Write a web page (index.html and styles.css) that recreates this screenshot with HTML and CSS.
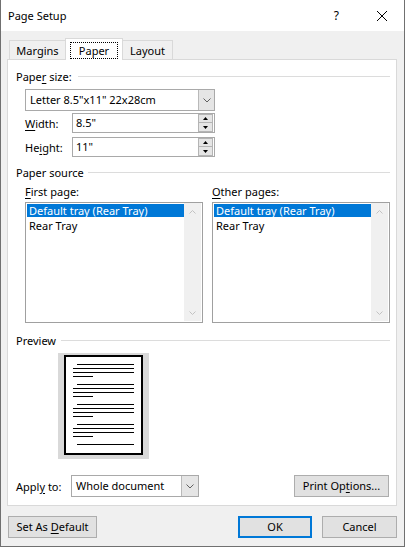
FILE: index.html
```
<!DOCTYPE html>
<html>
<head>
<meta charset="utf-8">
<title>Page Setup</title>
<link rel="stylesheet" href="styles.css">
</head>
<body>
<div class="dialog">
  <div class="titlebar">
    <span class="title">Page Setup</span>
    <div class="tb-controls">
      <span class="help">?</span>
      <svg class="close" width="10" height="10" viewBox="0 0 10 10"><path d="M0 0 L10 10 M10 0 L0 10" stroke="#000" stroke-width="1" fill="none"/></svg>
    </div>
  </div>
  <div class="body">
    <div class="tabs">
      <div class="tab tab-margins">Margins</div>
      <div class="tab tab-active"><span class="focus">Paper</span></div>
      <div class="tab tab-layout">Layout</div>
    </div>
    <div class="panel">
      <div class="ghead"><span>Pape<u>r</u> size:</span><div class="rule"></div></div>
      <div class="combo combo-size">
        <div class="combo-text">Letter 8.5"x11" 22x28cm</div>
        <div class="combo-btn"><svg width="8" height="5" viewBox="0 0 8 5"><path d="M0.5 0.5 L4 4 L7.5 0.5" fill="none" stroke="#606060" stroke-width="1"/></svg></div>
      </div>
      <div class="frow frow-width">
        <label class="flabel"><u>W</u>idth:</label>
        <div class="spin">
          <div class="spin-text">8.5"</div>
          <div class="spin-btns">
            <div class="sbtn"><svg width="5" height="3" viewBox="0 0 5 3"><polygon points="0,3 2.5,0 5,3" fill="#000"/></svg></div>
            <div class="sbtn"><svg width="5" height="3" viewBox="0 0 5 3"><polygon points="0,0 5,0 2.5,3" fill="#000"/></svg></div>
          </div>
        </div>
      </div>
      <div class="frow frow-height">
        <label class="flabel">He<u>i</u>ght:</label>
        <div class="spin">
          <div class="spin-text">11"</div>
          <div class="spin-btns">
            <div class="sbtn"><svg width="5" height="3" viewBox="0 0 5 3"><polygon points="0,3 2.5,0 5,3" fill="#000"/></svg></div>
            <div class="sbtn"><svg width="5" height="3" viewBox="0 0 5 3"><polygon points="0,0 5,0 2.5,3" fill="#000"/></svg></div>
          </div>
        </div>
      </div>
      <div class="ghead ghead-source"><span>Paper source</span><div class="rule"></div></div>
      <div class="sources">
        <div class="scol">
          <div class="slabel"><u>F</u>irst page:</div>
          <div class="listbox">
            <div class="items">
              <div class="item sel">Default tray (Rear Tray)</div>
              <div class="item">Rear Tray</div>
            </div>
            <div class="vscroll">
              <div class="arrow"><svg width="7" height="4" viewBox="0 0 7 4"><path d="M0.5 3.5 L3.5 0.5 L6.5 3.5" fill="none" stroke="#c2c2c2" stroke-width="1"/></svg></div>
              <div class="arrow"><svg width="7" height="4" viewBox="0 0 7 4"><path d="M0.5 0.5 L3.5 3.5 L6.5 0.5" fill="none" stroke="#c2c2c2" stroke-width="1"/></svg></div>
            </div>
          </div>
        </div>
        <div class="scol">
          <div class="slabel"><u>O</u>ther pages:</div>
          <div class="listbox">
            <div class="items">
              <div class="item sel">Default tray (Rear Tray)</div>
              <div class="item">Rear Tray</div>
            </div>
            <div class="vscroll">
              <div class="arrow"><svg width="7" height="4" viewBox="0 0 7 4"><path d="M0.5 3.5 L3.5 0.5 L6.5 3.5" fill="none" stroke="#c2c2c2" stroke-width="1"/></svg></div>
              <div class="arrow"><svg width="7" height="4" viewBox="0 0 7 4"><path d="M0.5 0.5 L3.5 3.5 L6.5 0.5" fill="none" stroke="#c2c2c2" stroke-width="1"/></svg></div>
            </div>
          </div>
        </div>
      </div>
      <div class="ghead ghead-preview"><span>Preview</span><div class="rule"></div></div>
      <div class="preview">
        <div class="page">
          <svg width="75" height="96" viewBox="0 0 75 96">
            <g fill="#000">
              <rect x="11" y="7" width="57" height="1"/>
              <rect x="7" y="11" width="61" height="1"/>
              <rect x="7" y="15" width="61" height="1"/>
              <rect x="7" y="19" width="20" height="1"/>
              <rect x="11" y="27" width="57" height="1"/>
              <rect x="7" y="31" width="61" height="1"/>
              <rect x="7" y="35" width="61" height="1"/>
              <rect x="7" y="39" width="20" height="1"/>
              <rect x="11" y="47" width="57" height="1"/>
              <rect x="7" y="51" width="61" height="1"/>
              <rect x="7" y="55" width="61" height="1"/>
              <rect x="7" y="59" width="20" height="1"/>
              <rect x="11" y="67" width="57" height="1"/>
              <rect x="7" y="71" width="61" height="1"/>
              <rect x="7" y="75" width="61" height="1"/>
              <rect x="7" y="79" width="20" height="1"/>
              <rect x="11" y="87" width="57" height="1"/>
            </g>
          </svg>
        </div>
      </div>
      <div class="apply-row">
        <label class="alabel">Appl<u>y</u> to:</label>
        <div class="combo combo-apply">
          <div class="combo-text">Whole document</div>
          <div class="combo-btn"><svg width="8" height="5" viewBox="0 0 8 5"><path d="M0.5 0.5 L4 4 L7.5 0.5" fill="none" stroke="#606060" stroke-width="1"/></svg></div>
        </div>
        <div class="spacer"></div>
        <button class="btn btn-print">Print Op<u>t</u>ions...</button>
      </div>
    </div>
    <div class="footer">
      <button class="btn btn-default">Set As <u>D</u>efault</button>
      <div class="spacer"></div>
      <button class="btn btn-ok">OK</button>
      <button class="btn btn-cancel">Cancel</button>
    </div>
  </div>
</div>
</body>
</html>
```
FILE: styles.css
```
* {
  box-sizing: border-box;
}
html, body {
  margin: 0;
  padding: 0;
  background: #ffffff;
}
body {
  font-family: "Noto Sans", "Open Sans", sans-serif;
  font-size: 11px;
  color: #000;
}
u {
  text-underline-offset: 2px;
}
.dialog {
  width: 405px;
  height: 547px;
  border: 1px solid #707070;
  border-top: none;
  background: #f0f0f0;
  display: flex;
  flex-direction: column;
}
.titlebar {
  height: 31px;
  background: #fff;
  display: flex;
  align-items: center;
  padding-left: 7px;
  flex: none;
}
.title {
  font-size: 11px;
  line-height: 15px;
}
.tb-controls {
  margin-left: auto;
  display: flex;
  align-items: center;
  padding-right: 17px;
}
.help {
  font-size: 12px;
  line-height: 15px;
  margin-right: 38px;
}
.close {
  display: block;
}
.body {
  flex: 1;
  padding: 7px 7px 0 6px;
  display: flex;
  flex-direction: column;
}
.tabs {
  height: 21px;
  display: flex;
  align-items: flex-end;
  margin-left: 2px;
}
.tab {
  height: 19px;
  border: 1px solid #d9d9d9;
  border-bottom: none;
  background: #f0f0f0;
  text-align: center;
  padding-top: 2px;
  line-height: 15px;
}
.tab-margins {
  width: 56px;
  border-right: none;
}
.tab-layout {
  width: 50px;
  border-left: none;
}
.tab-active {
  position: relative;
  width: 58px;
  height: 22px;
  margin-bottom: -1px;
  background: #fff;
  padding-top: 3px;
}
.focus {
  display: inline-block;
  border: 1px dotted #000;
  padding: 0 8px;
  line-height: 15px;
}
.panel {
  width: 390px;
  height: 447px;
  border: 1px solid #d9d9d9;
  background: #fff;
  padding: 9px 6px 0 8px;
  display: flex;
  flex-direction: column;
  flex: none;
}
.ghead {
  display: flex;
  align-items: center;
  height: 15px;
  line-height: 15px;
  gap: 6px;
}
.ghead-source {
  margin-top: 8px;
  gap: 4px;
}
.ghead-preview {
  margin-top: 10px;
  gap: 5px;
}
.rule {
  flex: 1;
  height: 1px;
  background: #dcdcdc;
}
.combo {
  display: flex;
  height: 22px;
  border: 1px solid #a9a9a9;
  background: #fff;
}
.combo-size {
  width: 190px;
  margin-left: 9px;
  margin-top: 5px;
}
.combo-text {
  flex: 1;
  padding-left: 4px;
  line-height: 20px;
}
.combo-btn {
  width: 16px;
  background: #e5e5e5;
  border-left: 1px solid #b9b9b9;
  display: flex;
  align-items: center;
  justify-content: center;
}
.combo-btn svg {
  display: block;
}
.frow {
  display: flex;
  align-items: center;
  margin-left: 9px;
}
.frow-width {
  margin-top: 2px;
}
.frow-height {
  margin-top: 4px;
}
.flabel {
  width: 47px;
  line-height: 15px;
}
.spin {
  width: 143px;
  height: 20px;
  border: 1px solid #a9a9a9;
  display: flex;
  background: #fff;
}
.spin-text {
  flex: 1;
  padding-left: 3px;
  line-height: 18px;
}
.spin-btns {
  width: 15px;
  margin-right: 1px;
  display: flex;
  flex-direction: column;
}
.sbtn {
  height: 9px;
  background: #e5e5e5;
  border: 1px solid #b4b4b4;
  display: flex;
  align-items: center;
  justify-content: center;
}
.sbtn + .sbtn {
  border-top: none;
}
.sbtn svg {
  display: block;
}
.sources {
  display: grid;
  grid-template-columns: 178px 178px;
  column-gap: 9px;
  margin-left: 9px;
  margin-top: 4px;
}
.slabel {
  line-height: 15px;
  height: 15px;
}
.listbox {
  margin-top: 3px;
  height: 121px;
  border: 1px solid #a0a0a0;
  padding: 0 1px 1px 1px;
  display: flex;
  background: #fff;
}
.items {
  flex: 1;
  padding-top: 1px;
}
.item {
  line-height: 13px;
  height: 13px;
  padding-left: 2px;
  white-space: nowrap;
}
.item + .item {
  margin-top: 2px;
}
.item.sel {
  background: #0078d7;
  color: #fff;
}
.vscroll {
  width: 17px;
  background: #f0f0f0;
  display: flex;
  flex-direction: column;
  justify-content: space-between;
}
.arrow {
  height: 17px;
  display: flex;
  align-items: center;
  justify-content: center;
}
.arrow svg {
  display: block;
}
.preview {
  margin-top: 5px;
  margin-left: 42px;
  width: 91px;
  height: 106px;
  background: #d9d9d9;
  padding: 2px 6px 4px 6px;
}
.page {
  width: 79px;
  height: 100px;
  border: 2px solid #000;
  background: #fff;
}
.page svg {
  display: block;
}
.apply-row {
  margin-top: 16px;
  display: flex;
  align-items: center;
  height: 22px;
}
.alabel {
  width: 55px;
  line-height: 15px;
}
.combo-apply {
  width: 128px;
}
.combo-apply .combo-btn {
  width: 17px;
}
.spacer {
  flex: 1;
}
.btn {
  font-family: "Noto Sans", "Open Sans", sans-serif;
  font-size: 11px;
  color: #000;
  height: 22px;
  background: #e1e1e1;
  border: 1px solid #adadad;
  padding: 0;
  margin: 0;
  line-height: 18px;
}
.btn-print {
  width: 95px;
  margin-right: 1px;
}
.footer {
  margin-top: 10px;
  display: flex;
  height: 22px;
}
.btn-default {
  width: 89px;
  margin-left: 1px;
}
.btn-ok {
  width: 74px;
  border: 2px solid #0078d7;
}
.btn-cancel {
  width: 75px;
  margin-left: 10px;
}
```
